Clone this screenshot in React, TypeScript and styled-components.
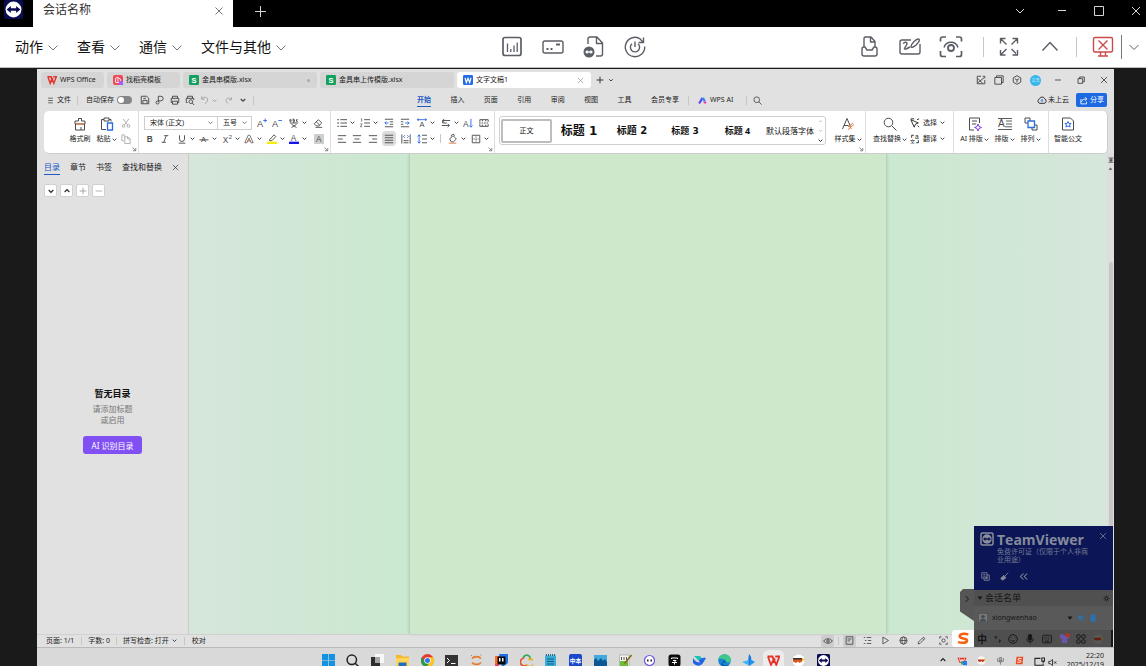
import React, { ReactNode } from "react";
import styled, { createGlobalStyle, css } from "styled-components";

const Global = createGlobalStyle`
  *, *::before, *::after { box-sizing: border-box; }
  html, body { margin: 0; background: #000; }
  body { font-family: "Noto Sans", "Noto Sans CJK SC", sans-serif; overflow: hidden; }
  button, input, select { font: inherit; color: inherit; margin: 0; }
  button { background: none; border: 0; padding: 0; cursor: pointer; white-space: nowrap; }
  svg { display: block; flex: none; }
`;

/* ---------- icons ---------- */

const txt = (s: string, x: number, y: number, size: number, fill = "currentColor", weight = 400, style = "normal") => (
  <text x={x} y={y} fontSize={size} fill={fill} stroke="none" fontWeight={weight} fontStyle={style}
    fontFamily='"Liberation Sans", "Noto Sans CJK SC", sans-serif'>{s}</text>
);
const BLUE = "#2f6be0";

/* 12-unit icons of the document editor */
const small: Record<string, ReactNode> = {
  caret: <path d="M1.500 4 6 8.500 10.500 4" strokeWidth="2.400" />,
  chevron: <path d="M2.500 4.500 6 8l3.500-3.500" strokeWidth="1.700" />,
  chevronUp: <path d="M2.500 7.500 6 4l3.500 3.500" strokeWidth="1.700" />,
  close: <path d="M1.500 1.500l9 9M10.500 1.500l-9 9" />,
  min: <path d="M1.5 6h9" />,
  restore: <path d="M1.500 4h7v7h-7zM4 4V1.500h7v7H8.500" />,
  plus: <path d="M6 1v10M1 6h10" strokeWidth="1.3" />,
  minus: <path d="M1 6h10" />,
  lines: <path d="M2 2h8M2 6h8M2 10h8" />,
  save: <><path d="M1.500 1.500h6.500l2.500 2.500v6.500h-9z" /><path d="M3.500 10V6.500H8.500V10M4 4h3" /></>,
  exportDoc: <><path d="M4 8V1.500h3a2.500 2.500 0 1 1 0 5.500H4" /><circle cx="3" cy="9" r="1.800" /></>,
  print: <path d="M3 4V1.500h6V4M3 9H1.500V4h9v5H9M3 7.500h6v3.500H3z" />,
  preview: <><path d="M3 4V1.500h6V4M3 9H1.500V4h9v2" /><circle cx="7" cy="8" r="2.200" /><path d="M8.700 9.700 11 12" /></>,
  undo: <path d="M2 1.500V5h3.500M2.300 4.800C4 2 8 2 9 4.500S7.500 9 6 10.500" />,
  redo: <path d="M10 1.500V5H6.500M9.700 4.800C8 2 4 2 3 4.500S4.500 9 6 10.500" />,
  search: <><circle cx="5" cy="5" r="3.800" /><path d="M7.800 7.800 11.500 11.500" /></>,
  cloud: <><path d="M3.500 10a2.800 2.800 0 0 1-.5-5.400 3.300 3.300 0 0 1 6.200 0A2.800 2.800 0 0 1 8.500 10z" /><path d="M6 8.500V5.500M4.700 6.600 6 5.300l1.300 1.300" stroke={BLUE} /></>,
  share: <path d="M2.500 4v6.500h7.500V7.500M3.500 8C3.500 5 6 4 10 4M8 1.500 10.500 4 8 6.500" />,
  cut: <><circle cx="3" cy="9.500" r="1.600" /><circle cx="9" cy="9.500" r="1.600" /><path d="M4 8.300 9.500 1M8 8.300 2.500 1" /></>,
  copy: <><path d="M4 3.500V1H1v7h2.500M4.500 3.500h4l2.500 2.500v5.500H4.500z" /><path d="M8 3.500V6h3" /></>,
  aPlus: <>{txt("A", 0, 10.800, 11)}<path d="M7.500 3h4.500M9.800 .8v4.500" stroke={BLUE} /></>,
  aMinus: <>{txt("A", 0, 10.800, 11)}<path d="M7.500 3H12" stroke={BLUE} /></>,
  pinyin: <path d="M1 2h1.500v2H1zM5 .5V4h1.500V2H5M10.500 2H9v2h1.500M1 6h10M6 4.500V6M3 7.500l6 4M9 7.500l-6 4" />,
  eraser: <path d="M1.500 7 6.500 2l4 4-3.500 3.500H4zM4 4.500l4 4M3 11.200h8" />,
  bold: txt("B", 2, 10, 10, "currentColor", 700),
  italic: <path d="M5 2h5M2 10h5M7.500 2l-3 8" />,
  underline: <path d="M3 1.500v4.500a3 3 0 0 0 6 0V1.500M2 11h8" />,
  strike: <>{txt("A", 2.500, 9.500, 9)}<path d="M.5 7h11" /></>,
  sup: <>{txt("X", 1, 10.500, 10)}{txt("2", 8, 5.500, 7)}</>,
  effect: <><path d="M1 10.500 5 1.500h2l4 9H8.500L6 5 3.500 10.500z" strokeWidth=".9" /><circle cx="6" cy="8" r="1" stroke="#e7773a" /></>,
  highlight: <><path d="M3 7 8.500 1l2 2L6 8H3z" /><path d="M0 10.600h12" stroke="#f6ee00" strokeWidth="2.800" /></>,
  color: <>{txt("A", 2, 8, 10)}<path d="M0 10.600h12" stroke="#1515e8" strokeWidth="2.800" /></>,
  shade: <><path d="M0 0h12v12H0z" fill="#cfcfcf" stroke="none" />{txt("A", 2.500, 9.500, 10)}</>,
  list: <><path d="M4 2h8M4 6h8M4 10h8" /><path d="M.5 2h1.500M.5 6h1.500M.5 10h1.500" strokeWidth="1.600" /></>,
  numbers: <><path d="M5 2h7M5 6h7M5 10h7" /><path d="M1 1h1v3.500M.5 7h2l-2 3.500h2" strokeWidth=".8" /></>,
  outdent: <><path d="M1 1.500h10M7 4.500h4M7 7.500h4M1 10.500h10" /><path d="M5.500 6H1M3 4 1 6l2 2" stroke={BLUE} /></>,
  indent: <><path d="M1 1.500h10M1 4.500h3M1 7.500h3M1 10.500h10" /><path d="M6 6h5M9 4l2 2-2 2" stroke={BLUE} /></>,
  charWidth: <>{txt("A", 3, 11, 9)}<path d="M0 2h12M2 .5.5 2 2 3.500M10 .5 11.500 2 10 3.500" stroke={BLUE} strokeWidth="1.100" /></>,
  wrap: <path d="M11 3H2M4 1 2 3l2 2M1 9h9M8 7l2 2-2 2M2 3v3h5" />,
  sort: <>{txt("A", 0, 10.500, 10)}<path d="M9.500 1v10M7.500 9l2 2 2-2" stroke={BLUE} /></>,
  ruler: <><path d="M1 4.500V2h10v2.500M1 7.500V10h10V7.500M4 2v2M8 2v2M4 8v2M8 8v2" /><path d="M0 6h12" strokeDasharray="2 1" /></>,
  left: <path d="M1 2h10M1 6h6M1 10h10" />,
  center: <path d="M1 2h10M3 6h6M1 10h10" />,
  right: <path d="M1 2h10M5 6h6M1 10h10" />,
  justify: <path d="M1 1.500h10M1 4.500h10M1 7.500h10M1 10.500h10" />,
  distribute: <><path d="M1 .5v11M11 .5v11M3 8h6M3 10.500h6" /><path d="M4.500 1.500 3 3l1.500 1.500M7.500 1.500 9 3 7.500 4.500" stroke={BLUE} /></>,
  spacing: <><path d="M6 1.500h6M6 6h6M6 10.500h6" /><path d="M2.500 1v10M.8 3l1.700-2 1.700 2M.8 9l1.700 2 1.700-2" stroke={BLUE} /></>,
  fill: <><path d="M2 6l4-4 4 4-3.500 3.500H4zM4 3a2 2 0 0 1 4-1" /><path d="M1 11h9" stroke="#e2793c" /></>,
  border: <><path d="M1.500 1.500h9v9h-9z" /><path d="M6 2v8M2 6h8" strokeDasharray="1 1" /></>,
  corner: <path d="M3 3l6 6M9.500 4v5.500H4" strokeWidth="1.500" />,
  cursor: <path d="M1 2l4 9 1.500-3.500L10 6zM1 1h4M8.500 2 11 1M9 9l2 2" />,
  translate: <><path d="M4.500 1.500H2v3M7.500 10.500H10v-3" />{txt("a", 6, 6, 8)}{txt("文", 0, 11, 6)}</>,
  eye: <><path d="M.8 6C3 2.500 9 2.500 11.200 6 9 9.500 3 9.500.8 6z" /><circle cx="6" cy="6" r="1.500" /></>,
  doc: <path d="M1.500 1h9v10h-9zM3.500 4h5M3.500 6.500h3" />,
  outline: <path d="M1 2h2M5 2h6M2.500 6h2M6.500 6H11M1 10h2M5 10h6" />,
  play: <path d="M2.500 1.500 10 6l-7.500 4.500z" />,
  globe: <><circle cx="6" cy="6" r="4.800" /><ellipse cx="6" cy="6" rx="2.200" ry="4.800" /><path d="M1.200 6h9.600" /></>,
  pen: <path d="M1.500 10.500 2 8l6-6c1-1 3 1 2 2L4 10zM7 3l2 2" />,
  frame: <><path d="M1 3.500V1h2.500M8.500 1H11v2.500M11 8.500V11H8.500M3.500 11H1V8.500" /><circle cx="6" cy="6" r="2.200" /></>,
  image: <><path d="M6 1.500H1.500v9h9V6M2 9.500 10 3M2 4l6 6" /><path d="M8 1.500h2.500V4" /></>,
  window: <path d="M1 3h8v8H1zM3 3V1h8v8H9" />,
  cube: <><path d="M6 .8l4.500 2.600v5.200L6 11.200 1.500 8.600V3.400z" /><path d="M3.500 4.500 6 6l2.500-1.500M6 6v3" /></>,
  pages: <path d="M1 1h7v7H1zM4 8v3h7V4H8M3 3.500h3M3 5.500h3M6 7h3M6 9h3" />,
  broom: <path d="M11 1 6.500 5.500M5 4.500l3 3-4.500 3.500L1 8.500z" fill="currentColor" />,
  rewind: <path d="M6 2 2 6l4 4M11 2 7 6l4 4" strokeWidth="1.400" />,
  gear: <><circle cx="6" cy="6" r="2.600" strokeWidth="1.600" /><path d="M6 .8v2M6 9.200v2M.8 6h2M9.200 6h2M2.400 2.400l1.300 1.300M8.300 8.300l1.300 1.300M9.600 2.400 8.300 3.700M3.700 8.300 2.400 9.600" /></>,
  triangle: <path d="M1 3h10L6 9.500z" fill="currentColor" stroke="none" />,
  pointer: <path d="M1 1l10 4-4 1.500 3.500 3.500-1 1L6 7.500 4.500 11z" fill="#2b71ab" stroke="none" />,
  clip: <path d="M2 2h8v9.500H2zM4 .5h4v2H4z" fill="#2b71ab" stroke="none" />,
  user: <><path d="M0 0h12v12H0z" fill="#777" stroke="#333" /><circle cx="6" cy="4.500" r="2.200" fill="#454b52" stroke="none" /><path d="M2 10.500c0-5 8-5 8 0z" fill="#454b52" stroke="none" /></>,
  smile: <><circle cx="6" cy="6" r="5.200" /><path d="M3.500 7c1 2.200 4 2.200 5 0" /><path d="M4 3.800v1.200M8 3.800v1.200" /></>,
  comma: <><circle cx="3" cy="3.500" r="1.600" /><path d="M8 7.500c1.500 0 1.500 2-.5 3.500" strokeWidth="2" /></>,
  mic: <><rect x="4" y=".5" width="4" height="7" rx="2" fill="currentColor" /><path d="M2 5.500a4 4 0 0 0 8 0M6 9.500v2" /></>,
  keyboard: <><rect x=".8" y="1.500" width="10.400" height="9" rx="1" /><path d="M3 4h6M3 6h6" strokeDasharray="1 1.300" /><path d="M3.500 8.500h5" /></>,
  apps: <><rect x="1" y="1" width="4" height="4" rx="1" /><rect x="7" y="1" width="4" height="4" rx="1" /><rect x="1" y="7" width="4" height="4" rx="1" /><rect x="7" y="7" width="4" height="4" rx="1" /></>,
  shirt: <><path d="M1 2l3-1 2 2 2-2 3 1v4H9v5H3V6H1z" fill="#6a55a8" stroke="none" /><circle cx="9.500" cy="2.500" r="2.500" fill="#b3332b" stroke="none" /></>,
  face: <><circle cx="6" cy="6" r="5.800" fill="#f7f3ee" stroke="none" /><path d="M1 4.500h9v2.500L7 8 6 6.500 4 8 1.500 7z" fill="#c4351c" stroke="none" /><path d="M10 3l2 2-3 2z" fill="#f4b21c" stroke="none" /></>,
  faceDim: <><circle cx="6" cy="6" r="5.800" fill="#5a5856" stroke="none" /><path d="M1 4.500h9v2.500L7 8 6 6.500 4 8 1.500 7z" fill="#5e1c10" stroke="none" /><path d="M10 3l2 2-3 2z" fill="#7a5a12" stroke="none" /></>,
  split: <path d="M1 2h10M1 10.500h10M6 3 3.500 5.500h5zM6 9.500 3.500 7h5z" strokeWidth="1.300" />,
  up: <path d="M6 3.500 10.500 9h-9z" fill="currentColor" stroke="none" />,
  micTray: <path d="M4.500 2h3v6h-3zM2 3v4h8V3M6 8v3.500M4.500 4h3M4.500 6h3" />,
  monitor: <path d="M7 1.500H1v7.500h9V7M3 11.300h5M8.500 1h3v3.500h-3zM10 4.500v2" />,
  mute: <path d="M1 4.500h2L6 2v8L3 7.500H1zM8 4.500l3 3M11 4.500l-3 3" />,
  wps: <path d="M.5 2h4.500l1 4.500L7.200 3.500M1.200 2.300 3.800 10 6 4.500 8.200 10l3-8H7.500" stroke="#e5352b" strokeWidth="1.700" />,
  docer: <><rect width="12" height="12" rx="2.500" fill="#ee4a58" stroke="none" /><path d="M3 9V4l3-1.500V8M7 4l2 1v4H4" stroke="#fff" /><path d="M7 7h5v5H7z" fill="#a85cf0" stroke="none" /></>,
  sheet: <><rect width="12" height="12" rx="1.500" fill="#14a15f" stroke="none" />{txt("S", 3, 9.500, 9, "#fff", 700)}</>,
  writer: <><rect width="12" height="12" rx="1.500" fill="#246bea" stroke="none" /><path d="M2.500 3.500 4 9l2-5 2 5 1.500-5.500" stroke="#fff" strokeWidth="1.500" /></>,
  ai: <><path d="M1.500 10 6 2.500" stroke="#5a4bf5" strokeWidth="3" /><path d="M6.500 2.500 9 7" stroke="#2f8df7" strokeWidth="3" /><path d="M8 7.500l2.500 2" stroke="#ea3cc0" strokeWidth="3" /></>,
  sogou: <path d="M10.500 2.200C6 1 2.500 1.800 2.500 4c0 3 7 1 6.800 4-.2 2.400-4.800 2.300-8.300 1.300" stroke="#f4600c" strokeWidth="2.300" />,
  sogouSmall: <><path d="M2 1h9l-1 10H1z" fill="#ee4b22" stroke="none" /><path d="M8.500 3.500c-3-.6-5-.2-4.500 1.300.5 1.200 4 .6 4 2.300 0 1.500-3 1.500-5 1" stroke="#fff" strokeWidth="1.300" /></>,
  wpsTray: <><path d="M.5 2h11L9 8H3z" fill="#e5352b" stroke="none" /><path d="M3 3l1.500 4L6 4l1.500 3L9 3" stroke="#fff" /><path d="M4 7h4l-2 4z" fill="#2aa84a" stroke="none" /><path d="M7 6h5v5H7z" fill="#1f7df0" stroke="none" /></>,
};

/* 14-unit icons over the ribbon captions */
const large: Record<string, ReactNode> = {
  brush: <><path d="M5.500 4V1.500h3V4H12v3H2V4zM2.500 7v6H11.500V7" /><path d="M3 6.800h8" stroke="#e7773a" /><path d="M8 13v-3" /></>,
  paste: <><path d="M6 12.500H1.500v-10H4M9 2.500h2v2M4 1h5v3H4z" /><path d="M7.500 6h5v7h-5z" stroke={BLUE} strokeWidth="1.300" /></>,
  styleSet: <><path d="M1.500 12 6 1.500l3.500 8M3 8.500h4.500" /><path d="M7 10l5-4M7 12.500l6-5M8.500 9l2 3" stroke="#e2793c" /></>,
  find: <><circle cx="5.500" cy="5.500" r="4.300" /><path d="M8.700 8.700 13.500 13.500" /></>,
  aiLayout: <><path d="M11.500 6V1h-10v12H6M4 4h5M4 7h4" /><path d="M10 7l1 2.500L13.500 10.500 11 11.500 10 14 9 11.500 6.500 10.500 9 9.500z" stroke="#7a3cf0" /></>,
  layout: <>{txt("A", 0, 10, 10)}<path d="M8 4h6M8 7h6M7 9.800h7M0 12.500h14M0 1.500h14" strokeWidth=".9" /></>,
  arrange: <><path d="M1 1h5v3M1 1v5h3M8 13h5V8h-2M8 13v-2" /><path d="M4 4h6.500v6.500H4z" stroke={BLUE} strokeWidth="1.300" /></>,
  smartDoc: <><path d="M1.500 1h8L12.500 4v9h-11z" /><path d="M7 4.500l1 2h2L8.500 8l.7 2L7 9l-2.200 1 .7-2L4 6.500h2z" stroke={BLUE} /></>,
};

/* 24-unit icons of the remote session toolbar */
const session: Record<string, ReactNode> = {
  stats: <><rect x="3" y="2.500" width="18" height="18" rx="2" strokeWidth="1.700" /><path d="M7.500 8.500v8.500M10.800 14v3M14 10.500V17M17.200 7.500V17" strokeWidth="1.300" /></>,
  drive: <><rect x="2" y="6" width="20" height="12" rx="2" /><path d="M5.500 14h2M9.500 14h2" strokeWidth="2" /><path d="M15 9.500h4" strokeWidth="2" /></>,
  fileTransfer: <><path d="M6 9V4a2 2 0 0 1 2-2h7l5.500 6v11a2 2 0 0 1-2 2H14M14.500 2v6.500h6" /><circle cx="7" cy="17" r="5.500" fill="#5b5e66" stroke="none" /><path d="M3 17l2.500-2.300v1.500h3v-1.500L11 17l-2.500 2.300v-1.500h-3v1.500z" fill="#fff" stroke="none" /></>,
  reboot: <><path d="M17.500 4A9.700 9.700 0 1 0 21.700 11.500" /><path d="M20.500 2.500v5h-5M20 7l-3-3" /><path d="M9 8.800a4.600 4.600 0 1 0 6 0M12 6.500V12" /></>,
  inbox: <><path d="M7 12V3.500A1.500 1.500 0 0 1 8.500 2H14l4 4.500V12M13.500 2v5H18" /><path d="M5 14c0-2 1-2 2-2h1l2 3h5l2-3h1c1 0 2 0 2 2v5a2 2 0 0 1-2 2H7a2 2 0 0 1-2-2z" /></>,
  whiteboard: <><path d="M13 5H4a2 2 0 0 0-2 2v10a2 2 0 0 0 2 2h16a2 2 0 0 0 2-2V9" /><path d="M5 8.500c3-2 5-1.500 3.500 1.500S5 14.500 8 14l4-2" /><path d="M13 11.500c0-2 5-8 7.500-7.500s-1 6-5.500 8c-1 .4-2 .5-2-.5z" /></>,
  capture: <><path d="M1.500 6.500V4a2 2 0 0 1 2-2H7M17 2h3.500a2 2 0 0 1 2 2v2.500M22.500 16v3.500a2 2 0 0 1-2 2H17M7 21.500H3.500a2 2 0 0 1-2-2V16" strokeWidth="1.700" /><circle cx="12" cy="13" r="3" strokeWidth="1.800" /><path d="M5 12.500C7 5.500 17 5.500 19 12.500" /></>,
  expand: <path d="M3.500 8.500v-5h5M4 4l5.500 5.500M20.500 8.500v-5h-5M20 4l-5.500 5.500M3.500 15v5h5M4 19.500 9.500 14M20.500 15v5h-5M20 19.500 14.500 14" />,
  collapse: <path d="M4.500 15.500 12 7.500l7.500 8" />,
  disconnect: <><rect x="2.500" y="2.500" width="19" height="14.500" rx="1.500" /><path d="M7.500 5.500l9 9M16.500 5.500l-9 9M9.500 17v4M14.500 17v4M7 21h10" /></>,
};

const Svg = styled.svg<{ $size: number; $tone?: string }>`
  width: ${p => p.$size}px;
  height: ${p => p.$size}px;
  ${p => p.$tone && css`color: ${p.$tone};`}
  fill: none;
  stroke: currentColor;
`;
const Icon = ({ n, s = 10, tone }: { n: string; s?: number; tone?: string }) => (
  <Svg $size={s} $tone={tone} viewBox="0 0 12 12" strokeWidth="1.1" aria-hidden>{small[n]}</Svg>
);
const BigIcon = ({ n }: { n: string }) => (
  <Svg $size={14} $tone="#4a4a4a" viewBox="0 0 14 14" strokeWidth="1" aria-hidden>{large[n]}</Svg>
);
const SessionIcon = ({ n }: { n: string }) => (
  <Svg $size={24} viewBox="0 0 24 24" strokeWidth="1.4" strokeLinejoin="round" aria-hidden>{session[n]}</Svg>
);
const TeamLogo = ({ s, bg = "#0b0d52", fg = "#fff" }: { s: number; bg?: string; fg?: string }) => (
  <Svg $size={s} viewBox="0 0 18 18" aria-hidden>
    <rect width="18" height="18" rx="2" fill={bg} stroke="none" />
    <circle cx="9" cy="9" r="7.500" fill={fg} stroke="none" />
    <path d="M2.500 9l4-3.300v2h5v-2l4 3.300-4 3.300v-2h-5v2z" fill={bg} stroke="none" />
  </Svg>
);

/* ---------- session window ---------- */

const Screen = styled.div`
  height: 100vh;
  display: flex;
  flex-direction: column;
  overflow: hidden;
  background: #1a1a1a;
`;
const TitleBar = styled.header`
  flex: none;
  display: flex;
  height: 27px;
  padding-left: 4px;
  background: #000;
  color: #d6d6d6;
`;
const SessionTab = styled.div`
  display: flex;
  align-items: center;
  width: 200px;
  height: 27px;
  margin-left: 10px;
  padding: 0 10px 8px;
  background: #fff;
  color: #333;
  font-size: 12px;
  line-height: 16px;
  span { flex: 1; }
  svg { margin-top: 2px; }
`;
const NewTab = styled.button`
  width: 54px;
  height: 22px;
  display: grid;
  place-items: center;
`;
const WindowButtons = styled.div`
  display: flex;
  gap: 17px;
  height: 22px;
  margin-left: auto;
  button { width: 20px; display: grid; place-items: center; }
  button:first-child { margin-right: 5px; }
`;
const SessionBar = styled.div`
  flex: none;
  display: grid;
  grid-template-columns: 1fr auto 1fr;
  align-items: center;
  height: 41px;
  padding: 0 7px 1px;
  background: #fff;
  border-bottom: 1px solid #bdbdbd;
  color: #5b5e66;
`;
const Menus = styled.nav`
  display: flex;
  gap: 19px;
  padding-left: 8px;
`;
const MenuButton = styled.button`
  display: flex;
  align-items: center;
  gap: 5px;
  font-size: 14px;
  line-height: 20px;
  color: #111;
`;
const Actions = styled.div<{ $end?: boolean }>`
  display: flex;
  align-items: center;
  gap: 17px;
  justify-content: ${p => (p.$end ? "flex-end" : "center")};
`;
const Rule = styled.i<{ $h: number; $m?: string; $tone?: string }>`
  flex: none;
  width: 1px;
  height: ${p => p.$h}px;
  margin: ${p => p.$m ?? "0"};
  background: ${p => p.$tone ?? "#c6c6c6"};
`;
const Red = styled.button`color: #cb4a4a;`;
const Cluster = styled.div<{ $gap?: number; $start?: number }>`
  display: flex;
  align-items: center;
  gap: ${p => p.$gap ?? 0}px;
  padding-left: ${p => p.$start ?? 0}px;
`;

/* ---------- remote desktop ---------- */

const Stage = styled.main`
  flex: 1;
  min-height: 0;
  display: flex;
  padding: 1px 32px 0 37px;
`;
const Desktop = styled.div`
  position: relative;
  flex: 1;
  min-width: 0;
  display: flex;
  flex-direction: column;
  background: #e1e1e1;
  color: #222;
  font-size: 7px;
  line-height: 10px;
`;
const TabStrip = styled.div`
  flex: none;
  display: flex;
  align-items: center;
  gap: 3px;
  height: 22px;
  padding: 0 6px 0 4px;
`;
const DocTab = styled.button<{ $w: number; $on?: boolean }>`
  display: flex;
  align-items: center;
  gap: 3px;
  width: ${p => p.$w}px;
  height: 16px;
  padding: 0 7px 0 6px;
  border-radius: 3px;
  background: ${p => (p.$on ? "#fff" : "#d5d5d5")};
  text-align: left;
  span { flex: 1; }
`;
const Dot = styled.i`
  width: 3px;
  height: 3px;
  border-radius: 50%;
  background: #aaa;
`;
const Avatar = styled.b`
  width: 11px;
  height: 11px;
  border-radius: 50%;
  background: #38b4ea;
  color: #d5f2ff;
  font-size: 4px;
  line-height: 11px;
  text-align: center;
  font-weight: 400;
`;
const Right = styled.div<{ $gap: number; $start?: number }>`
  display: flex;
  align-items: center;
  gap: ${p => p.$gap}px;
  margin-left: auto;
  padding-left: ${p => p.$start ?? 0}px;
`;
const MenuRow = styled.div`
  flex: none;
  display: flex;
  align-items: center;
  height: 18px;
  margin-bottom: 2px;
  padding: 0 7px 0 10px;
`;
const QuickAccess = styled.div`
  display: flex;
  align-items: center;
  width: 370px;
`;
const Toggle = styled.input`
  appearance: none;
  width: 15px;
  height: 8px;
  margin: 0 8px 0 3px;
  border-radius: 4px;
  background: #858585;
  &::before {
    content: "";
    display: block;
    width: 6px;
    height: 6px;
    margin: 1px;
    border-radius: 50%;
    background: #fff;
  }
`;
const RibbonTabs = styled.nav`
  display: flex;
  justify-content: space-between;
  width: 262px;
`;
const RibbonTab = styled.button<{ $on?: boolean }>`
  height: 14px;
  border-bottom: 1px solid transparent;
  ${p => p.$on && css`color: #2158c4; font-weight: 700; border-color: #2158c4;`}
`;
const Share = styled.button`
  display: flex;
  align-items: center;
  justify-content: center;
  gap: 2px;
  width: 31px;
  height: 14px;
  border-radius: 2px;
  background: #1c69e4;
  color: #fff;
`;
const Ribbon = styled.div`
  flex: none;
  display: flex;
  height: 43px;
  margin: 0 6px -1px 7px;
  background: #fff;
  border: 1px solid #cdcdcd;
  border-width: 0 1px 1px 0;
  border-radius: 5px;
  position: relative;
  z-index: 1;
`;
const Group = styled.div<{ $w?: number; $pad?: number }>`
  position: relative;
  display: flex;
  flex: ${p => (p.$w ? "none" : 1)};
  ${p => p.$w && css`width: ${p.$w}px;`}
  min-width: 0;
  padding: 5px 0 0 ${p => p.$pad ?? 0}px;
  border-right: 1px solid #dedede;
  &:last-child { border-right: 0; }
`;
const Launcher = styled.button`
  position: absolute;
  right: 1px;
  bottom: 1px;
  color: #666;
`;
const BigTool = styled.button<{ $w: number }>`
  display: flex;
  flex-direction: column;
  align-items: center;
  gap: 3px;
  width: ${p => p.$w}px;
  height: 30px;
  padding-top: 1px;
  span { display: flex; align-items: center; gap: 1px; }
`;
const Rows = styled.div`
  display: flex;
  flex-direction: column;
  gap: 3px;
`;
const Row = styled.div`
  display: flex;
  align-items: center;
  height: 13px;
`;
const Tool = styled.button<{ $w: number; $on?: boolean }>`
  display: flex;
  align-items: center;
  gap: 3px;
  width: ${p => p.$w}px;
  height: 13px;
  padding-left: 1px;
  ${p => p.$on && css`background: #dcdcdc; border-radius: 2px; outline: 1px solid #dcdcdc; width: 12px; margin-right: ${p.$w - 12}px;`}
`;
const Combo = styled.label<{ $w: number }>`
  display: flex;
  align-items: center;
  width: ${p => p.$w}px;
  height: 14px;
  padding: 0 3px 0 5px;
  border: 1px solid #cfcfcf;
  & + & { margin-left: -1px; }
  select {
    flex: 1;
    min-width: 0;
    appearance: none;
    border: 0;
    padding: 0;
    background: none;
    outline: 0;
    line-height: 10px;
  }
`;
const Gallery = styled.div`
  flex: 1;
  display: flex;
  align-items: center;
  height: 29px;
  margin: 0 5px 0 4px;
  padding: 0 2px 0 1px;
  border: 1px solid #cfcfcf;
  border-radius: 3px;
  overflow: hidden;
`;
const StyleItem = styled.button<{ $w: number; $size: number; $bold?: boolean; $on?: boolean; $wide?: boolean }>`
  flex: none;
  width: ${p => p.$w}px;
  height: 24px;
  overflow: hidden;
  font-size: ${p => p.$size}px;
  line-height: 16px;
  font-weight: ${p => (p.$bold ? 700 : 400)};
  color: #111;
  ${p => p.$wide && css`font-family: "DejaVu Sans", "Noto Sans CJK SC", sans-serif;`}
  ${p => p.$on && css`border: 2px solid #bdbdbd; border-radius: 2px;`}
`;
const GalleryArrows = styled.div`
  display: flex;
  flex-direction: column;
  justify-content: space-between;
  height: 24px;
  margin-left: auto;
`;

/* ---------- document area ---------- */

const Body = styled.div`
  flex: 1;
  min-height: 0;
  display: flex;
`;
const Sidebar = styled.aside`
  width: 152px;
  display: flex;
  flex-direction: column;
  border-right: 1px solid #c3cdc5;
`;
const SideTabs = styled.div`
  display: flex;
  align-items: center;
  gap: 10px;
  height: 21px;
  margin-top: 7px;
  padding: 0 0 6px 7px;
  font-size: 8px;
  line-height: 12px;
`;
const SideTab = styled.button<{ $on?: boolean }>`
  height: 15px;
  border-bottom: 1px solid transparent;
  ${p => p.$on && css`color: #2158c4; border-color: #2158c4;`}
`;
const SideTools = styled.div`
  display: flex;
  gap: 3px;
  padding: 3px 7px;
  button {
    display: grid;
    place-items: center;
    width: 13px;
    height: 13px;
    border-radius: 2px;
    background: #fff;
    border: 1px solid #d0d0d0;
  }
`;
const Empty = styled.div`
  flex: 1;
  display: flex;
  flex-direction: column;
  align-items: center;
  justify-content: center;
  padding-top: 7px;
  color: #777;
  font-size: 8px;
  line-height: 11px;
  text-align: center;
  h2 { margin: 0 0 3px; color: #111; font-size: 9px; line-height: 13px; }
  p { margin: 0; width: 48px; }
`;
const AiButton = styled.button`
  width: 59px;
  height: 18px;
  margin-top: 11px;
  border-radius: 3px;
  background: #8150f3;
  color: #fff;
`;
const Canvas = styled.div`
  flex: 1;
  display: flex;
  justify-content: center;
  background: linear-gradient(90deg, #d6e6db, #cbe8d0 22%, #cbe8d0 77%, #d6e6db);
`;
const Paper = styled.div`
  width: 52%;
  background: #cee8cb;
  border: solid #bccdbd;
  border-width: 0 1px;
  box-shadow: 0 0 3px rgba(90, 120, 90, 0.25);
`;
const Scroll = styled.div`
  width: 7px;
  display: flex;
  flex-direction: column;
  align-items: center;
  gap: 3px;
  padding-top: 4px;
  background: #dedede;
`;
const Thumb = styled.i`
  width: 4px;
  flex: 1;
  margin-top: 88px;
  border-radius: 2px;
  background: #c6c6c8;
`;
const Status = styled.footer`
  flex: none;
  display: flex;
  align-items: center;
  height: 13px;
  padding: 0 164px 1px 9px;
  border-top: 1px solid #d0d0d0;
`;
const StatusButton = styled.button<{ $on?: boolean }>`
  display: grid;
  place-items: center;
  width: 13px;
  height: 12px;
  background: ${p => (p.$on ? "#cdcdcd" : "none")};
  border-radius: 2px;
`;

/* ---------- taskbar ---------- */

const Taskbar = styled.div`
  flex: none;
  display: grid;
  grid-template-columns: 1fr 508px 1fr;
  align-items: start;
  height: 19px;
  overflow: hidden;
  background: #d9d9d9;
  border-top: 1px solid #b9b9b9;
`;
const Apps = styled.div`
  grid-column: 2;
  display: flex;
  justify-content: space-between;
  padding-top: 6px;
`;
const AppButton = styled.button<{ $on?: boolean }>`
  position: relative;
  ${p => p.$on && css`
    border-radius: 2px;
    background: #ececec;
    box-shadow: 0 0 0 4px #ececec;
  `}
`;
const Tray = styled.div`
  display: flex;
  justify-content: flex-end;
  gap: 10px;
  padding: 3px 10px 0 0;
  svg { margin-top: 5px; }
`;
const Clock = styled.time`
  text-align: right;
  line-height: 9px;
`;

/* ---------- remote control panel ---------- */

const Panel = styled.section`
  position: absolute;
  right: 1px;
  bottom: 19px;
  z-index: 2;
  width: 139px;
  color: #161616;
`;
const PanelHead = styled.div`
  display: grid;
  grid-template-columns: 17px 1fr 9px;
  align-content: start;
  height: 64px;
  padding: 6px 5px 0 6px;
  background: #0c1656;
  color: #868b9c;
  h3 { margin: 0; font: 700 14px/16px "Open Sans", "Noto Sans", sans-serif; }
  button { align-self: start; }
  p { grid-column: 2; margin: 0 6px 0 0; line-height: 8px; color: #747a94; }
`;
const PanelTools = styled.div`
  grid-column: 1 / -1;
  display: flex;
  gap: 10px;
  padding: 8px 0 0 1px;
`;
const PanelList = styled.div`
  height: 40px;
  background: #595959;
`;
const ListTitle = styled.div`
  display: flex;
  align-items: center;
  gap: 2px;
  height: 16px;
  padding: 0 3px;
  background: #505050;
  font-size: 9px;
  span { flex: 1; }
`;
const Member = styled.div`
  display: flex;
  align-items: center;
  gap: 4px;
  height: 24px;
  padding: 0 16px 0 4px;
  span { flex: 1; }
`;
const Handle = styled.button`
  position: absolute;
  left: -14px;
  top: 63px;
  width: 14px;
  height: 32px;
  display: grid;
  place-items: center;
  padding-bottom: 12px;
  background: #565656;
  clip-path: polygon(3px 0, 100% 0, 100% 100%, 0 70%, 0 3px);
`;
const Ime = styled.div`
  display: flex;
  align-items: center;
  justify-content: space-between;
  height: 17px;
  padding: 0 8px 0 3px;
  background: #4f4f4f;
  border-right: 2px solid #161616;
  font-weight: 700;
  font-size: 10px;
`;
const ImeLogo = styled.button`
  position: absolute;
  left: -22px;
  bottom: 0;
  width: 22px;
  height: 17px;
  display: grid;
  place-items: center;
  background: #fff;
  border-radius: 3px 0 0 3px;
`;

const appIcons: [string, ReactNode][] = [
  ["开始菜单", <g stroke="none" fill="#1593e0"><path d="M0 0h6.200v6.200H0zM6.800 0H13v6.200H6.800zM0 6.800h6.200V13H0zM6.800 6.800H13V13H6.800z" /></g>],
  ["搜索", <><circle cx="5.800" cy="5.800" r="4.700" strokeWidth="1.500" /><path d="M9 9l4 4" strokeWidth="1.500" /></>],
  ["任务视图", <g stroke="none"><path d="M4 0h9v9H4z" fill="#f7f7f7" /><path d="M0 3h9v10H0z" fill="#2d2d2d" /><path d="M4 3h5v6H4z" fill="#a6a6a6" /></g>],
  ["文件资源管理器", <g stroke="none"><path d="M0 1h5l1.500 1.500H13V13H0z" fill="#f4b92b" /><path d="M0 4h13v9H0z" fill="#ffd459" /><path d="M2.500 8.500h8V13h-8z" fill="#1d70c0" /></g>],
  ["Chrome", <g stroke="none"><circle cx="6.500" cy="6.500" r="6.500" fill="#e53a2f" /><path d="M.8 3.300A6.500 6.500 0 0 0 5.500 13L9 7.800 4 8z" fill="#269b48" /><path d="M12.200 3.300A6.500 6.500 0 0 1 5.500 13L9.300 7.500 8 3.300z" fill="#fac71e" /><circle cx="6.500" cy="6.500" r="3.200" fill="#fff" /><circle cx="6.500" cy="6.500" r="2.500" fill="#2f79e8" /></g>],
  ["终端", <><path d="M0 1h13v11H0z" fill="#333" stroke="none" /><path d="M2 4l2.500 2.500L2 9M6 9.500h4.500" stroke="#fff" /></>],
  ["Jupyter", <><path d="M2 4.500C4 2 9 2 11 4.500M2 8.500c2 2.500 7 2.500 9 0" stroke="#ea7a2b" strokeWidth="1.600" /><path d="M1.500 1v1M11 .5v1" stroke="#888" /></>],
  ["IntelliJ IDEA", <g stroke="none"><path d="M0 2h6L3 13H0z" fill="#fb6a2c" /><path d="M4 0h9v9l-6 4z" fill="#1e6fe8" /><path d="M0 10l7 3H1z" fill="#e9288a" /><path d="M2.500 2.500h8v8h-8z" fill="#060606" /><path d="M4 4h1.500v3.500H4zM7 4h1.500v3.500H7z" fill="#fff" /></g>],
  ["Navicat", <><path d="M4.500 4A4 4 0 1 0 7 11" stroke="#e0562e" strokeWidth="1.700" /><path d="M3 3.500C6-1 12 2 9.500 6" stroke="#39a852" strokeWidth="1.700" /><path d="M8 5.500a4 3.700 0 1 1-1.500 5" stroke="#efb326" strokeWidth="1.700" /></>],
  ["记事本", <><path d="M1 1.500h11V13H1z" fill="#3aacd8" stroke="none" /><path d="M3 5h7M3 7.500h7M3 10h7" stroke="#135f86" /><path d="M2 1h9" stroke="#246a86" strokeDasharray="1 1" strokeWidth="2" /></>],
  ["中本", <><rect width="13" height="13" rx="2" fill="#1749c8" stroke="none" />{txt("中本", .8, 8.700, 5.800, "#fff", 700)}</>],
  ["监控", <g stroke="none"><path d="M0 1h13v11H0z" fill="#42a9de" /><path d="M0 12V6l2-2 2 3 3-3 2 3 2-2 2 3v4z" fill="#0e5795" /></g>],
  ["Notepad++", <><path d="M.5 1h9.500v12H.5z" fill="#f5f5ee" stroke="#999" strokeWidth=".6" /><path d="M1 7h8v5.500H1z" fill="#6abf38" stroke="none" /><path d="M2.500 3v3M5 3v3M7.500 3v3" stroke="#555" /><path d="M5.500 9.500 12.500 1" stroke="#8a6a22" strokeWidth="1.600" /></>],
  ["助手", <><circle cx="6.500" cy="6.500" r="5" fill="#fff" stroke="#6d55ea" strokeWidth="1.200" /><path d="M4.800 5.500v2M8.200 5.500v2" stroke="#222" strokeWidth="1.500" /></>],
  ["字体", <><rect x=".5" y=".5" width="12" height="12" rx="2.500" fill="#0c0c0c" stroke="none" /><path d="M3.500 5V4h6v1M5 6.500h3L6.500 8v2.500M4 8.500h5" stroke="#fff" /></>],
  ["飞书", <g stroke="none"><path d="M1 2h6l3 4-3 2z" fill="#18c3b4" /><path d="M6 6.500C9 3 11 3.500 13 4l-3 5c-3 4-7 3-10 0V4c2 3 4 4.500 7 4.500z" fill="#2363e6" /></g>],
  ["Edge", <g stroke="none"><circle cx="6.500" cy="6.500" r="6.300" fill="#1686d4" /><path d="M.5 5C2-1 12-1 12.800 5.500 13 9 9 9 8 8c1-3-4-4-7.500-3z" fill="#3dc989" /><path d="M8 8c-1-2-4-1-3.500 1.500S9 12 11 11c-2 2.500-7 2-8-1.500" fill="#0c4f9e" /></g>],
  ["钉钉", <g stroke="none"><path d="M7 0c3 3 3 6 0 13-1-3-1-8 0-13z" fill="#1577ea" /><path d="M6.500 6 0 8l6 3z" fill="#38b6f5" /><path d="M8 5l5 3-5 3.500z" fill="#1e96f1" /></g>],
  ["WPS Office", <path d="M.5 2.500h5l1.300 4.300L8 4.500M1 2.700 4 11l2.700-6L9.300 11l3-8.500H8.200" stroke="#e5352b" strokeWidth="1.800" />],
  ["QQ", <g stroke="none"><circle cx="6.500" cy="6.500" r="6" fill="#fff" /><path d="M1 5h9v2.500L7.500 9 6 7.500 4 9 1 7.500z" fill="#dd5423" /><path d="M1 4h9v1.500H1z" fill="#333" /><path d="M10 4l3 1.500-3 2z" fill="#f6bf1c" /></g>],
];

const Caret = () => <Icon n="caret" s={5} tone="#444" />;
const T = ({ n, w, c, on, label }: { n: string; w: number; c?: boolean; on?: boolean; label?: string }) => (
  <Tool $w={w} $on={on} aria-label={label ?? n}><Icon n={n} tone="#4a4a4a" />{c && <Caret />}</Tool>
);
const Big = ({ n, w, c, children }: { n: string; w: number; c?: boolean; children: ReactNode }) => (
  <BigTool $w={w}><BigIcon n={n} /><span>{children}{c && <Caret />}</span></BigTool>
);
const Corner = () => <Launcher aria-label="更多设置"><Icon n="corner" s={6} /></Launcher>;

export default function App() {
  return (
    <Screen>
      <Global />
      <TitleBar>
        <TeamLogo s={19} />
        <SessionTab>
          <span>会话名称</span>
          <button aria-label="关闭标签"><Svg $size={8} $tone="#777" viewBox="0 0 8 8"><path d="M.5.500l7 7M7.500.500l-7 7" /></Svg></button>
        </SessionTab>
        <NewTab aria-label="新建标签"><Svg $size={11} viewBox="0 0 11 11"><path d="M5.500 0v11M0 5.500h11" /></Svg></NewTab>
        <WindowButtons>
          <button aria-label="选项"><Svg $size={10} viewBox="0 0 10 10"><path d="M1 3l4 4 4-4" /></Svg></button>
          <button aria-label="最小化"><Svg $size={10} viewBox="0 0 10 10"><path d="M1 4.500h8" /></Svg></button>
          <button aria-label="最大化"><Svg $size={10} viewBox="0 0 10 10"><path d="M.5.500h9v9h-9z" /></Svg></button>
          <button aria-label="关闭"><Svg $size={10} viewBox="0 0 10 10"><path d="M1 1l8 8M9 1l-8 8" /></Svg></button>
        </WindowButtons>
      </TitleBar>

      <SessionBar>
        <Menus>
          {["动作", "查看", "通信", "文件与其他"].map(m => (
            <MenuButton key={m}>{m}<Svg $size={10} $tone="#777" viewBox="0 0 10 10"><path d="M.5 3.500 5 8l4.500-4.500" /></Svg></MenuButton>
          ))}
        </Menus>
        <Actions>
          {["stats", "drive", "fileTransfer", "reboot"].map(n => <button key={n} aria-label={n}><SessionIcon n={n} /></button>)}
        </Actions>
        <Actions $end>
          {["inbox", "whiteboard", "capture"].map(n => <button key={n} aria-label={n}><SessionIcon n={n} /></button>)}
          <Cluster>
            <Rule $h={20} $m="0 13px 0 3px" />
            <button aria-label="全屏"><SessionIcon n="expand" /></button>
          </Cluster>
          <button aria-label="收起"><SessionIcon n="collapse" /></button>
          <Cluster>
            <Rule $h={20} $m="0 14px 0 -3px" />
            <Red aria-label="断开连接"><SessionIcon n="disconnect" /></Red>
            <Rule $h={24} $m="0 7px 0 6px" $tone="#777" />
            <button aria-label="更多"><Svg $size={10} viewBox="0 0 10 10"><path d="M.5 3 5 7.500 9.500 3" /></Svg></button>
          </Cluster>
        </Actions>
      </SessionBar>

      <Stage>
        <Desktop>
          <TabStrip>
            <DocTab $w={63}><Icon n="wps" /><span>WPS Office</span></DocTab>
            <DocTab $w={73}><Icon n="docer" /><span>找稻壳模板</span></DocTab>
            <DocTab $w={134}><Icon n="sheet" /><span>金具串模版.xlsx</span><Dot /></DocTab>
            <DocTab $w={134}><Icon n="sheet" /><span>金具串上传模版.xlsx</span></DocTab>
            <DocTab $w={134} $on><Icon n="writer" /><span>文字文稿1</span><Icon n="close" s={7} tone="#888" /></DocTab>
            <Cluster $gap={4} $start={2}>
              <button aria-label="新建"><Icon n="plus" s={8} /></button>
              <button aria-label="标签列表"><Icon n="chevron" s={6} /></button>
            </Cluster>
            <Right $gap={8}>
              <Icon n="image" tone="#444" /><Icon n="window" tone="#444" /><Icon n="cube" tone="#444" />
              <Avatar>文浩</Avatar>
              <Right $gap={15} $start={5}>
                <button aria-label="最小化文档"><Icon n="min" s={8} /></button>
                <button aria-label="还原"><Icon n="restore" s={8} /></button>
                <button aria-label="关闭文档"><Icon n="close" s={8} /></button>
              </Right>
            </Right>
          </TabStrip>

          <MenuRow>
            <QuickAccess>
              <Cluster $gap={3}>
                <Icon n="lines" s={7} />
                <button>文件</button>
              </Cluster>
              <Rule $h={9} $m="0 8px 0 6px" />
              <label htmlFor="autosave">自动保存</label>
              <Toggle id="autosave" type="checkbox" />
              <Cluster $gap={5}>
                <Icon n="save" tone="#444" /><Icon n="exportDoc" tone="#444" /><Icon n="print" tone="#444" /><Icon n="preview" tone="#444" />
                <Icon n="undo" tone="#a2a2a2" />
              </Cluster>
              <Cluster $gap={7} $start={2}>
                <Icon n="caret" s={5} tone="#a2a2a2" />
                <Icon n="redo" s={9} tone="#a2a2a2" />
                <Icon n="caret" s={6} tone="#444" />
                <Rule $h={9} />
              </Cluster>
            </QuickAccess>
            <RibbonTabs>
              {["开始", "插入", "页面", "引用", "审阅", "视图", "工具", "会员专享"].map((t, i) => (
                <RibbonTab key={t} $on={i === 0}>{t}</RibbonTab>
              ))}
            </RibbonTabs>
            <Rule $h={9} $m="0 9px" />
            <Cluster $gap={3}><Icon n="ai" s={9} /><button>WPS AI</button></Cluster>
            <Rule $h={9} $m="0 6px 0 13px" />
            <button aria-label="搜索"><Icon n="search" s={9} tone="#444" /></button>
            <Right $gap={7}>
              <Cluster $gap={1}><Icon n="cloud" /><span>未上云</span></Cluster>
              <Share><Icon n="share" s={9} />分享</Share>
            </Right>
          </MenuRow>

          <Ribbon>
            <Group $w={95} $pad={23}>
              <Big n="brush" w={26}>格式刷</Big>
              <Big n="paste" w={27} c>粘贴</Big>
              <Rows>
                <Row><Tool $w={12} aria-label="剪切"><Icon n="cut" tone="#aaa" /></Tool></Row>
                <Row><Tool $w={12} aria-label="复制"><Icon n="copy" tone="#aaa" /></Tool></Row>
              </Rows>
              <Corner />
            </Group>
            <Group $w={192} $pad={5}>
              <Rows>
                <Row>
                  <Combo $w={74}><select aria-label="字体"><option>宋体 (正文)</option></select><Icon n="chevron" s={7} tone="#777" /></Combo>
                  <Combo $w={35}><select aria-label="字号"><option>五号</option></select><Icon n="chevron" s={7} tone="#777" /></Combo>
                  <Cluster $start={4}><T n="aPlus" w={15} /><T n="aMinus" w={17} /><T n="pinyin" w={24} c /><T n="eraser" w={12} /></Cluster>
                </Row>
                <Row>
                  <T n="bold" w={15} /><T n="italic" w={17} /><T n="underline" w={22} c /><T n="strike" w={23} c />
                  <T n="sup" w={22} c /><T n="effect" w={23} c /><T n="highlight" w={22} c /><T n="color" w={25} c /><T n="shade" w={12} />
                </Row>
              </Rows>
              <Corner />
            </Group>
            <Group $w={164} $pad={5}>
              <Rows>
                <Row>
                  <T n="list" w={23} c /><T n="numbers" w={24} c /><T n="outdent" w={16} /><T n="indent" w={17} />
                  <T n="charWidth" w={24} c /><T n="wrap" w={22} c /><T n="sort" w={16} /><T n="ruler" w={12} />
                </Row>
                <Row>
                  <T n="left" w={15} /><T n="center" w={16} /><T n="right" w={16} /><T n="justify" w={17} on /><T n="distribute" w={16} />
                  <T n="spacing" w={24} c /><Rule $h={9} $m="0 6px 0 0" /><T n="fill" w={23} c /><T n="border" w={20} c />
                </Row>
              </Rows>
              <Corner />
            </Group>
            <Group>
              <Gallery>
                <StyleItem $w={51} $size={7} $on>正文</StyleItem>
                <StyleItem $w={54} $size={12} $bold $wide>标题 1</StyleItem>
                <StyleItem $w={52} $size={10} $bold $wide>标题 2</StyleItem>
                <StyleItem $w={54} $size={9} $bold $wide>标题 3</StyleItem>
                <StyleItem $w={51} $size={9} $bold>标题 4</StyleItem>
                <StyleItem $w={54} $size={8}>默认段落字体</StyleItem>
                <GalleryArrows><Icon n="chevronUp" s={5} tone="#aaa" /><Icon n="chevron" s={5} tone="#aaa" /><Icon n="caret" s={5} /></GalleryArrows>
              </Gallery>
              <Big n="styleSet" w={34} c>样式集</Big>
              <Corner />
            </Group>
            <Group $w={88} $pad={5}>
              <Big n="find" w={38} c>查找替换</Big>
              <Rows>
                <Row><Tool $w={40}><Icon n="cursor" />选择<Caret /></Tool></Row>
                <Row><Tool $w={40}><Icon n="translate" />翻译<Caret /></Tool></Row>
              </Rows>
            </Group>
            <Group $w={95} $pad={4}>
              <Big n="aiLayout" w={33} c>AI 排版</Big>
              <Big n="layout" w={27} c>排版</Big>
              <Big n="arrange" w={25} c>排列</Big>
            </Group>
            <Group $w={58} $pad={3}>
              <Big n="smartDoc" w={32}>智能公文</Big>
            </Group>
          </Ribbon>

          <Body>
            <Sidebar>
              <SideTabs>
                <SideTab $on>目录</SideTab><SideTab>章节</SideTab><SideTab>书签</SideTab><SideTab>查找和替换</SideTab>
                <button aria-label="关闭侧栏"><Icon n="close" s={7} /></button>
              </SideTabs>
              <SideTools>
                <button aria-label="展开"><Icon n="chevron" s={8} /></button>
                <button aria-label="折叠"><Icon n="chevronUp" s={8} /></button>
                <button aria-label="增加"><Icon n="plus" s={8} tone="#999" /></button>
                <button aria-label="减少"><Icon n="minus" s={8} tone="#999" /></button>
              </SideTools>
              <Empty>
                <h2>暂无目录</h2>
                <p>请添加标题<br />或启用</p>
                <AiButton>AI 识别目录</AiButton>
              </Empty>
            </Sidebar>
            <Canvas><Paper /></Canvas>
            <Scroll><Icon n="split" s={6} /><Icon n="up" s={5} tone="#555" /><Thumb /></Scroll>
          </Body>

          <Status>
            <span>页面: 1/1</span><Rule $h={8} $m="0 6px 0 7px" />
            <span>字数: 0</span><Rule $h={8} $m="0 6px" />
            <Cluster $gap={3}><span>拼写检查: 打开</span><Caret /></Cluster><Rule $h={8} $m="0 7px" />
            <span>校对</span>
            <Right $gap={5}>
              <Cluster $gap={4}>
                <StatusButton $on aria-label="护眼模式"><Icon n="eye" tone="#444" /></StatusButton>
                <Rule $h={8} />
                <StatusButton $on aria-label="页面视图"><Icon n="doc" s={9} tone="#444" /></StatusButton>
              </Cluster>
              {["outline", "play", "globe", "pen"].map(n => <StatusButton key={n} aria-label={n}><Icon n={n} s={9} tone="#444" /></StatusButton>)}
              <Cluster $start={4}>
                <StatusButton aria-label="适应页面"><Icon n="frame" s={9} tone="#444" /></StatusButton>
              </Cluster>
            </Right>
          </Status>

          <Taskbar>
            <Apps>
              {appIcons.map(([name, art]) => (
                <AppButton key={name} aria-label={name} $on={name === "WPS Office"}><Svg $size={13} viewBox="0 0 13 13">{art}</Svg></AppButton>
              ))}
              <AppButton aria-label="TeamViewer"><TeamLogo s={13} /></AppButton>
            </Apps>
            <Tray>
              <Icon n="chevronUp" s={8} /><Icon n="wpsTray" /><Icon n="face" s={9} /><Icon n="micTray" s={9} tone="#777" />
              <Icon n="sogouSmall" s={9} /><Cluster $gap={3}><Icon n="monitor" s={11} /><Icon n="mute" s={9} /></Cluster>
              <Clock>22:20<br />2025/12/19</Clock>
            </Tray>
          </Taskbar>

          <Panel>
            <PanelHead>
              <Svg $size={14} viewBox="0 0 14 14">
                <rect x="1" y="1" width="12" height="12" rx="1.500" stroke="#8a8f9c" strokeWidth="1.500" />
                <circle cx="7" cy="7" r="4.700" fill="#8a8f9c" stroke="none" />
                <path d="M3 7l2.500-2v1.300h3V5L11 7 8.500 9V7.700h-3V9z" fill="#0d1750" stroke="none" />
              </Svg>
              <h3>TeamViewer</h3>
              <button aria-label="关闭面板"><Icon n="close" s={8} /></button>
              <p>免费许可证（仅限于个人非商业用途）</p>
              <PanelTools><Icon n="pages" s={9} /><Icon n="broom" s={9} /><Icon n="rewind" s={9} /></PanelTools>
            </PanelHead>
            <PanelList>
              <ListTitle><Icon n="triangle" s={6} /><span>会话名单</span><Icon n="gear" s={7} /></ListTitle>
              <Member><Icon n="user" /><span>xiongwenhao</span><Icon n="triangle" s={6} /><Icon n="pointer" s={8} /><Icon n="clip" s={8} /></Member>
            </PanelList>
            <Handle aria-label="隐藏面板"><Svg $size={8} viewBox="0 0 8 8"><path d="M2.500 1l3 3-3 3" /></Svg></Handle>
            <Ime>
              <span>中</span><Icon n="comma" s={8} /><Icon n="smile" /><Icon n="mic" /><Icon n="keyboard" />
              <Icon n="shirt" s={11} /><Icon n="apps" /><Icon n="faceDim" />
            </Ime>
            <ImeLogo aria-label="输入法"><Icon n="sogou" s={13} /></ImeLogo>
          </Panel>
        </Desktop>
      </Stage>
    </Screen>
  );
}
